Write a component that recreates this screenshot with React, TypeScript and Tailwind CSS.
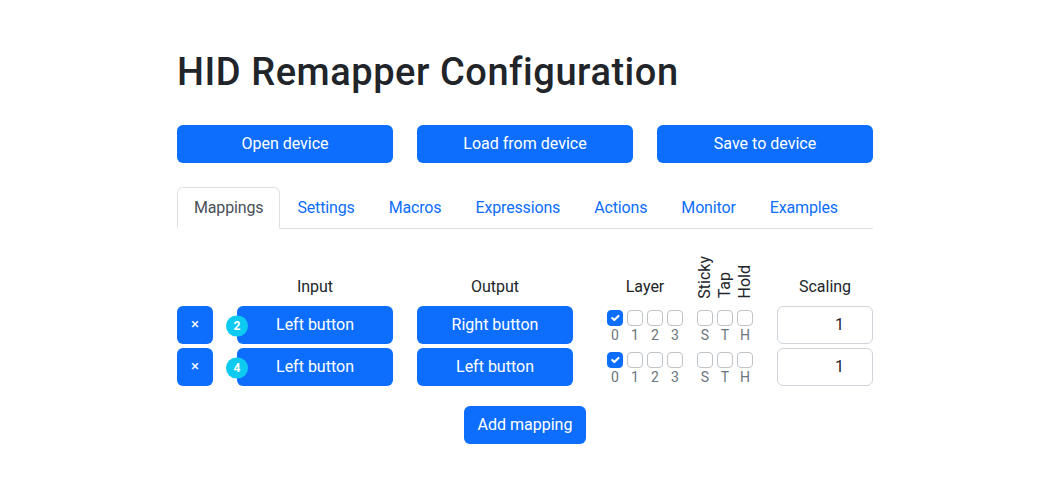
import React from "react";

const FONT = { fontFamily: 'Roboto, "Open Sans", "Liberation Sans", sans-serif' };

function Check({ checked }: { checked?: boolean }) {
  return (
    <div
      className={
        "w-4 h-4 rounded-[4px] border " +
        (checked ? "bg-[#0d6efd] border-[#0d6efd] flex items-center justify-center" : "bg-white border-[#bfc4c9]")
      }
    >
      {checked && (
        <svg viewBox="0 0 20 20" className="w-4 h-4">
          <path d="M6 10l3 3l6-6" fill="none" stroke="#fff" strokeWidth="3" strokeLinecap="round" strokeLinejoin="round" />
        </svg>
      )}
    </div>
  );
}

function CheckCol({ label, checked }: { label: string; checked?: boolean }) {
  return (
    <div className="w-5 flex flex-col items-center pt-1">
      <Check checked={checked} />
      <div className="text-[14px] leading-[18px] text-[#6c757d]">{label}</div>
    </div>
  );
}

function Row({ badge, output }: { badge: string; output: string }) {
  return (
    <div className="flex items-start">
      <button className="w-9 h-[38px] rounded-md bg-[#0d6efd] text-white text-[15px] leading-none">×</button>
      <div className="relative ml-6 w-[156px]">
        <button className="w-full h-[38px] rounded-md bg-[#0d6efd] text-white text-base">Left button</button>
        <span className="absolute left-0 top-1/2 mt-px -translate-x-1/2 -translate-y-1/2 w-[22px] h-[21px] rounded-full bg-[#0dcaf0] text-white text-[12px] font-bold flex items-center justify-center">
          {badge}
        </span>
      </div>
      <button className="ml-6 w-[156px] h-[38px] rounded-md bg-[#0d6efd] text-white text-base">{output}</button>
      <div className="ml-8 flex">
        <CheckCol label="0" checked />
        <CheckCol label="1" />
        <CheckCol label="2" />
        <CheckCol label="3" />
      </div>
      <div className="ml-[10px] flex">
        <CheckCol label="S" />
        <CheckCol label="T" />
        <CheckCol label="H" />
      </div>
      <div className="ml-[22px] w-24 h-[38px] rounded-md border border-[#ced4da] bg-white flex items-center justify-end pr-[28px] text-base text-[#212529]">
        1
      </div>
    </div>
  );
}

function Vert({ text }: { text: string }) {
  return (
    <div className="w-5 flex justify-center items-end">
      <span className="text-base leading-5 text-[#212529] [writing-mode:vertical-rl] rotate-180">{text}</span>
    </div>
  );
}

export default function App() {
  const tabs = ["Mappings", "Settings", "Macros", "Expressions", "Actions", "Monitor", "Examples"];
  return (
    <div className="w-[1050px] h-[500px] bg-white text-[#212529]" style={FONT}>
      <div className="w-[696px] mx-auto pt-[50px]">
        <h1 className="text-[38px] leading-[1.2] font-medium tracking-[0.55px] text-[#212529]">HID Remapper Configuration</h1>
        <div className="flex gap-6 mt-[29px]">
          {["Open device", "Load from device", "Save to device"].map((t) => (
            <button key={t} className="flex-1 h-[38px] rounded-md bg-[#0d6efd] text-white text-base">
              {t}
            </button>
          ))}
        </div>
        <div className="mt-[24px] flex border-b border-[#dee2e6]">
          {tabs.map((t, i) => (
            <div
              key={t}
              className={
                "px-4 py-2 text-base leading-6 border rounded-t-md -mb-px tracking-[-0.15px] " +
                (i === 0 ? "border-[#dee2e6] border-b-white bg-white text-[#495057]" : "border-transparent text-[#0d6efd]")
              }
            >
              {t}
            </div>
          ))}
        </div>
        <div className="mt-[22px] flex items-end h-[48px]">
          <div className="w-9" />
          <div className="ml-6 w-[156px] text-center leading-6">Input</div>
          <div className="ml-6 w-[156px] text-center leading-6">Output</div>
          <div className="ml-8 w-20 text-center leading-6">Layer</div>
          <div className="ml-[10px] flex h-full">
            <Vert text="Sticky" />
            <Vert text="Tap" />
            <Vert text="Hold" />
          </div>
          <div className="ml-[22px] w-24 text-center leading-6">Scaling</div>
        </div>
        <div className="mt-[7px] flex flex-col gap-1">
          <Row badge="2" output="Right button" />
          <Row badge="4" output="Left button" />
        </div>
        <div className="flex justify-center mt-[20px]">
          <button className="h-[38px] px-[14px] rounded-md bg-[#0d6efd] text-white text-base">Add mapping</button>
        </div>
      </div>
    </div>
  );
}
